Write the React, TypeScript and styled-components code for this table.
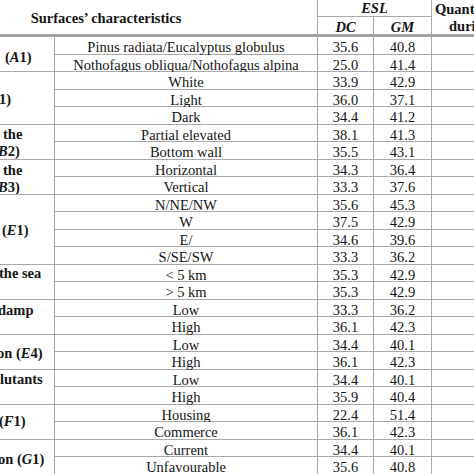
import React from "react";
import styled, { createGlobalStyle } from "styled-components";

const Global = createGlobalStyle`
  html, body {
    margin: 0;
    padding: 0;
    background: #ffffff;
    overflow: hidden;
  }
  body {
    font-family: "Liberation Serif", "Times New Roman", serif;
    color: #141414;
  }
`;

const Page = styled.div`
  width: 474px;
  height: 474px;
  overflow: hidden;
  background: #ffffff;
`;

const Table = styled.div`
  display: grid;
  width: max-content;
  gap: 1px;
  background: #a9a9a9;
  grid-template-columns: 54px 262px 55px 57px 90px;
  grid-template-rows: 16px 17px 1px repeat(25, 16.5px);
  font-size: 14.5px;
`;

type Place = { $col: string; $row: string };

const HeadCell = styled.div<Place & { $pr?: number; $dy?: number }>`
  grid-column: ${(p) => p.$col};
  grid-row: ${(p) => p.$row};
  background: #ffffff;
  display: flex;
  align-items: center;
  justify-content: center;
  font-weight: bold;
  white-space: nowrap;
  line-height: 14px;
  padding-right: ${(p) => p.$pr ?? 0}px;
  padding-top: ${(p) => Math.max(0, (p.$dy ?? 0) * 2)}px;
`;

const ItalicHead = styled(HeadCell)`
  font-style: italic;
`;

const SideHead = styled.div<Place>`
  grid-column: ${(p) => p.$col};
  grid-row: ${(p) => p.$row};
  background: #ffffff;
  display: flex;
  flex-direction: column;
  justify-content: center;
  font-weight: bold;
  white-space: nowrap;
  overflow: hidden;
  line-height: 17px;
  padding-top: 2px;
`;

const HeadLine = styled.span<{ $indent: number }>`
  display: block;
  margin-left: ${(p) => p.$indent}px;
`;

const Rule = styled.div`
  grid-column: 1 / -1;
  grid-row: 3;
  background: #9a9a9a;
`;

const Cell = styled.div<Place>`
  grid-column: ${(p) => p.$col};
  grid-row: ${(p) => p.$row};
  background: #ffffff;
  display: flex;
  align-items: center;
  justify-content: center;
  white-space: nowrap;
  line-height: 12px;
  padding-top: 4px;
  box-sizing: border-box;
`;

const GroupCell = styled.div<Place & { $offset: number }>`
  grid-column: ${(p) => p.$col};
  grid-row: ${(p) => p.$row};
  background: #ffffff;
  display: flex;
  flex-direction: column;
  justify-content: center;
  white-space: nowrap;
  overflow: hidden;
  font-weight: bold;
  line-height: 17px;
  padding-top: ${(p) => Math.max(0, p.$offset * 2)}px;
  padding-bottom: ${(p) => Math.max(0, -p.$offset * 2)}px;
  box-sizing: border-box;
`;

const LabelLine = styled.span<{ $indent: number }>`
  display: block;
  margin-left: ${(p) => p.$indent}px;
`;

const Code = styled.i`
  font-style: italic;
`;

const rows: [string, string, string][] = [
  ["Pinus radiata/Eucalyptus globulus", "35.6", "40.8"],
  ["Nothofagus obliqua/Nothofagus alpina", "25.0", "41.4"],
  ["White", "33.9", "42.9"],
  ["Light", "36.0", "37.1"],
  ["Dark", "34.4", "41.2"],
  ["Partial elevated", "38.1", "41.3"],
  ["Bottom wall", "35.5", "43.1"],
  ["Horizontal", "34.3", "36.4"],
  ["Vertical", "33.3", "37.6"],
  ["N/NE/NW", "35.6", "45.3"],
  ["W", "37.5", "42.9"],
  ["E/", "34.6", "39.6"],
  ["S/SE/SW", "33.3", "36.2"],
  ["< 5 km", "35.3", "42.9"],
  ["> 5 km", "35.3", "42.9"],
  ["Low", "33.3", "36.2"],
  ["High", "36.1", "42.3"],
  ["Low", "34.4", "40.1"],
  ["High", "36.1", "42.3"],
  ["Low", "34.4", "40.1"],
  ["High", "35.9", "40.4"],
  ["Housing", "22.4", "51.4"],
  ["Commerce", "36.1", "42.3"],
  ["Current", "34.4", "40.1"],
  ["Unfavourable", "35.6", "40.8"],
];

type Group = {
  start: number;
  span: number;
  offset: number;
  lines: { indent: number; text: React.ReactNode }[];
};

const groups: Group[] = [
  { start: 0, span: 2, offset: 3, lines: [{ indent: 5, text: <>(<Code>A</Code>1)</> }] },
  { start: 2, span: 3, offset: 2, lines: [{ indent: -1, text: "1)" }] },
  {
    start: 5,
    span: 2,
    offset: 1,
    lines: [
      { indent: 3, text: "the" },
      { indent: -2, text: <><Code>B</Code>2)</> },
    ],
  },
  {
    start: 7,
    span: 2,
    offset: 2,
    lines: [
      { indent: 3, text: "the" },
      { indent: -2, text: <><Code>B</Code>3)</> },
    ],
  },
  { start: 9, span: 4, offset: 1, lines: [{ indent: 2, text: <>(<Code>E</Code>1)</> }] },
  { start: 13, span: 2, offset: -8.5, lines: [{ indent: -1, text: "the sea" }] },
  { start: 15, span: 2, offset: -6.5, lines: [{ indent: -2, text: "damp" }] },
  { start: 17, span: 2, offset: 1.5, lines: [{ indent: -3, text: <>on (<Code>E</Code>4)</> }] },
  { start: 19, span: 2, offset: -7.5, lines: [{ indent: 0, text: "lutants" }] },
  { start: 21, span: 2, offset: 0, lines: [{ indent: -1, text: <>(<Code>F</Code>1)</> }] },
  { start: 23, span: 2, offset: 2.5, lines: [{ indent: -2, text: <>on (<Code>G</Code>1)</> }] },
];

const FIRST = 4;

export default function App() {
  return (
    <Page>
      <Global />
      <Table>
        <HeadCell $col="1 / 3" $row="1 / 3" $pr={105} $dy={0.5}>
          Surfaces’ characteristics
        </HeadCell>
        <ItalicHead $col="3 / 5" $row="1">
          ESL
        </ItalicHead>
        <SideHead $col="5" $row="1 / 3">
          <HeadLine $indent={3}>Quantity</HeadLine>
          <HeadLine $indent={17}>during</HeadLine>
        </SideHead>
        <ItalicHead $col="3" $row="2" $dy={1}>
          DC
        </ItalicHead>
        <ItalicHead $col="4" $row="2" $dy={1}>
          GM
        </ItalicHead>
        <Rule />
        {groups.map((g) => (
          <GroupCell
            key={g.start}
            $col="1"
            $row={`${FIRST + g.start} / span ${g.span}`}
            $offset={g.offset}
          >
            {g.lines.map((l, i) => (
              <LabelLine key={i} $indent={l.indent}>
                {l.text}
              </LabelLine>
            ))}
          </GroupCell>
        ))}
        {rows.map((r, i) => (
          <React.Fragment key={i}>
            <Cell $col="2" $row={`${FIRST + i}`}>{r[0]}</Cell>
            <Cell $col="3" $row={`${FIRST + i}`}>{r[1]}</Cell>
            <Cell $col="4" $row={`${FIRST + i}`}>{r[2]}</Cell>
            <Cell $col="5" $row={`${FIRST + i}`} />
          </React.Fragment>
        ))}
      </Table>
    </Page>
  );
}
